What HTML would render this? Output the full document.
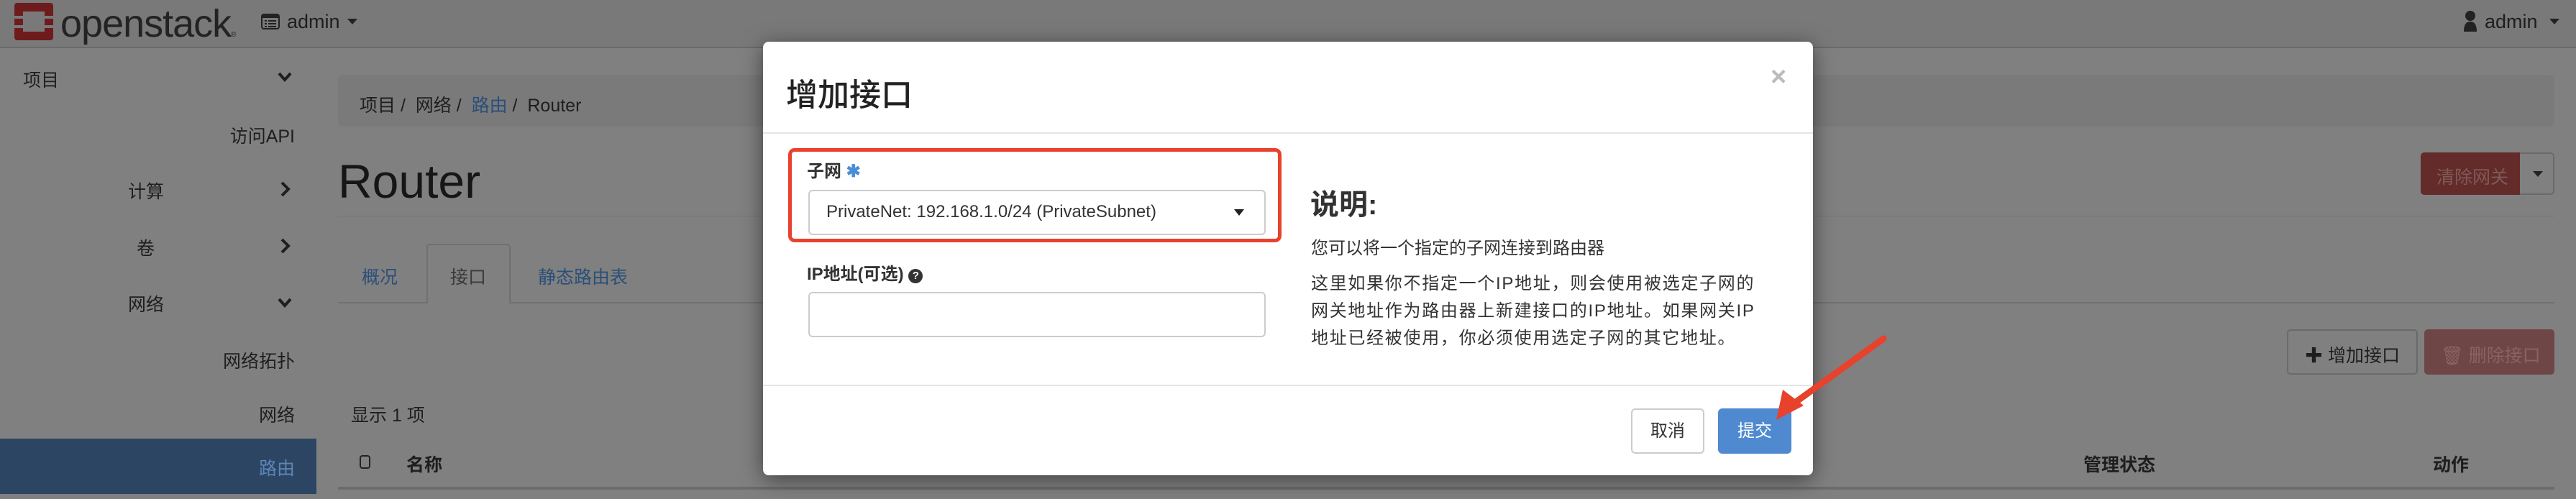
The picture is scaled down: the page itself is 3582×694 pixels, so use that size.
<!DOCTYPE html>
<html><head><meta charset="utf-8"><style>
*{margin:0;padding:0;box-sizing:border-box}
body{width:3582px;height:694px;background:#808080;position:relative;overflow:hidden;font-family:"Liberation Sans","Noto Sans CJK SC",sans-serif;color:#1e1e1e}
.a{position:absolute;white-space:nowrap}
.t{font-size:25px}
</style></head><body>
<div class="a" style="left:0;top:0;width:3582px;height:67px;background:#797979;border-bottom:2px solid #6a6a6a"></div>
<svg class="a" style="left:20px;top:4px" width="54" height="52" viewBox="0 0 54 52">
<rect x="0" y="0" width="54" height="52" rx="4" fill="#6e1b1e"/>
<rect x="12" y="12" width="30" height="28" fill="#797979"/>
<rect x="0" y="18" width="12" height="4" fill="#797979"/><rect x="0" y="31" width="12" height="4" fill="#797979"/>
<rect x="42" y="18" width="12" height="4" fill="#797979"/><rect x="42" y="31" width="12" height="4" fill="#797979"/>
</svg>
<div class="a" style="left:84px;top:2px;font-size:54px;color:#232323;letter-spacing:-1px">openstack<span style="font-size:10px">®</span></div>
<svg class="a" style="left:363px;top:19px" width="26" height="22"><rect x="1" y="1" width="24" height="20" rx="3" fill="none" stroke="#222" stroke-width="2"/><rect x="1" y="1" width="24" height="5" fill="#222"/><path d="M5 10h3M10 10h11M5 14h3M10 14h11M5 18h3M10 18h11" stroke="#222" stroke-width="2"/></svg>
<div class="a t" style="left:399px;top:15px;font-size:27px">admin</div>
<div class="a" style="left:483px;top:26px;border:7px solid transparent;border-top:8px solid #222;border-bottom:0"></div>
<svg class="a" style="left:3425px;top:14px" width="20" height="30"><circle cx="10" cy="8" r="7" fill="#222"/><path d="M1 30 Q1 16 10 16 Q19 16 19 30Z" fill="#222"/></svg>
<div class="a t" style="left:3455px;top:15px;font-size:27px">admin</div>
<div class="a" style="left:3545px;top:26px;border:7px solid transparent;border-top:8px solid #222;border-bottom:0"></div>

<div class="a t" style="left:32px;top:92px">项目</div>
<div class="a t" style="right:3172px;top:170px">访问API</div>
<div class="a t" style="left:178px;top:247px">计算</div>
<div class="a t" style="left:190px;top:326px">卷</div>
<div class="a t" style="left:178px;top:404px">网络</div>
<div class="a t" style="right:3172px;top:483px">网络拓扑</div>
<div class="a t" style="right:3172px;top:558px">网络</div>
<div class="a" style="left:0;top:610px;width:440px;height:77px;background:#2c4563"></div>
<div class="a t" style="right:3172px;top:632px;color:#5b86b8">路由</div>
<svg class="a" style="left:386px;top:100px" width="20" height="14"><path d="M2 2L10 11L18 2" fill="none" stroke="#1e1e1e" stroke-width="4"/></svg>
<svg class="a" style="left:390px;top:252px" width="14" height="22"><path d="M2 2L11 11L2 20" fill="none" stroke="#1e1e1e" stroke-width="4"/></svg>
<svg class="a" style="left:390px;top:331px" width="14" height="22"><path d="M2 2L11 11L2 20" fill="none" stroke="#1e1e1e" stroke-width="4"/></svg>
<svg class="a" style="left:386px;top:414px" width="20" height="14"><path d="M2 2L10 11L18 2" fill="none" stroke="#1e1e1e" stroke-width="4"/></svg>

<div class="a" style="left:470px;top:104px;width:3082px;height:72px;background:#7a7a7a;border-radius:6px"></div>
<div class="a t" style="left:500px;top:127px;color:#1e1e1e">项目 / &nbsp;网络 / &nbsp;<span style="color:#2a4f7a">路由</span> / &nbsp;Router</div>
<div class="a" style="left:470px;top:214px;font-size:66px;color:#161616">Router</div>
<div class="a" style="left:470px;top:300px;width:3082px;border-top:1px solid #737373"></div>
<div class="a" style="left:3366px;top:212px;width:138px;height:59px;background:#632b2a;border-radius:5px 0 0 5px"></div>
<div class="a t" style="left:3388px;top:227px;color:#7f5a59">清除网关</div>
<div class="a" style="left:3504px;top:212px;width:48px;height:59px;border:2px solid #6a6a6a;border-left:0;border-radius:0 5px 5px 0"></div>
<div class="a" style="left:3522px;top:238px;border:7px solid transparent;border-top:8px solid #222;border-bottom:0"></div>

<div class="a" style="left:470px;top:420px;width:3082px;border-top:2px solid #707070"></div>
<div class="a" style="left:593px;top:339px;width:117px;height:83px;background:#808080;border:2px solid #707070;border-bottom:0;border-radius:5px 5px 0 0"></div>
<div class="a t" style="left:503px;top:366px;color:#2a4f7a">概况</div>
<div class="a t" style="left:626px;top:366px;color:#3a3a3a">接口</div>
<div class="a t" style="left:748px;top:366px;color:#2a4f7a">静态路由表</div>

<div class="a" style="left:3180px;top:458px;width:182px;height:63px;border:2px solid #6a6a6a;border-radius:5px"></div>
<div class="a t" style="left:3205px;top:475px">✚ 增加接口</div>
<div class="a" style="left:3371px;top:458px;width:181px;height:63px;background:#6f4646;border-radius:5px"></div>
<div class="a t" style="left:3394px;top:475px;color:#8a6363">🗑 删除接口</div>

<div class="a t" style="left:488px;top:558px">显示 1 项</div>
<div class="a" style="left:500px;top:633px;width:15px;height:19px;border:2px solid #222;border-radius:4px"></div>
<div class="a t" style="left:565px;top:627px;font-weight:bold">名称</div>
<div class="a t" style="left:2897px;top:627px;font-weight:bold">管理状态</div>
<div class="a t" style="left:3383px;top:627px;font-weight:bold">动作</div>
<div class="a" style="left:470px;top:677px;width:3082px;border-top:4px solid #6c6c6c"></div>

<div class="a" style="left:1061px;top:58px;width:1460px;height:603px;background:#fff;border-radius:8px;box-shadow:0 6px 30px rgba(0,0,0,.5)"></div>
<div class="a" style="left:1093px;top:96px;font-size:44px;color:#222;font-weight:500">增加接口</div>
<div class="a" style="left:2462px;top:86px;font-size:38px;color:#bbb;font-weight:bold">×</div>
<div class="a" style="left:1061px;top:184px;width:1460px;border-top:2px solid #e5e5e5"></div>
<div class="a" style="left:1096px;top:206px;width:686px;height:131px;border:5px solid #e8412c;border-radius:9px"></div>
<div class="a" style="left:1122px;top:218px;font-size:24px;font-weight:bold;color:#333">子网 <span style="color:#4a8fd6">✱</span></div>
<div class="a" style="left:1124px;top:264px;width:636px;height:63px;border:2px solid #ccc;border-radius:6px"></div>
<div class="a" style="left:1149px;top:281px;font-size:24px;color:#333">PrivateNet: 192.168.1.0/24 (PrivateSubnet)</div>
<div class="a" style="left:1716px;top:291px;border:7px solid transparent;border-top:9px solid #222;border-bottom:0"></div>
<div class="a" style="left:1122px;top:361px;font-size:24px;font-weight:bold;color:#333">IP地址(可选) <span style="display:inline-block;width:20px;height:20px;border-radius:50%;background:#333;color:#fff;font-size:15px;text-align:center;line-height:20px;vertical-align:1px">?</span></div>
<div class="a" style="left:1124px;top:406px;width:636px;height:63px;border:2px solid #ccc;border-radius:6px"></div>
<div class="a" style="left:1822px;top:252px;font-size:40px;font-weight:bold;color:#333">说明:</div>
<div class="a" style="left:1823px;top:325px;font-size:24px;color:#333">您可以将一个指定的子网连接到路由器</div>
<div class="a" style="left:1823px;top:376px;font-size:24px;color:#333;line-height:38px;letter-spacing:1.7px">这里如果你不指定一个IP地址，则会使用被选定子网的<br>网关地址作为路由器上新建接口的IP地址。如果网关IP<br>地址已经被使用，你必须使用选定子网的其它地址。</div>
<div class="a" style="left:1061px;top:535px;width:1460px;border-top:2px solid #e5e5e5"></div>
<div class="a" style="left:2268px;top:568px;width:102px;height:63px;border:2px solid #ccc;border-radius:6px;font-size:24px;color:#333;text-align:center;line-height:59px">取消</div>
<div class="a" style="left:2389px;top:568px;width:102px;height:63px;background:#4f8ad0;border-radius:6px;font-size:24px;color:#fff;text-align:center;line-height:63px">提交</div>

<svg class="a" style="left:2430px;top:460px" width="200" height="140"><path d="M189 11L52 110" stroke="#e8412c" stroke-width="9" stroke-linecap="round"/><path d="M40 124L49 82L78 104Z" fill="#e8412c"/></svg>
</body></html>
